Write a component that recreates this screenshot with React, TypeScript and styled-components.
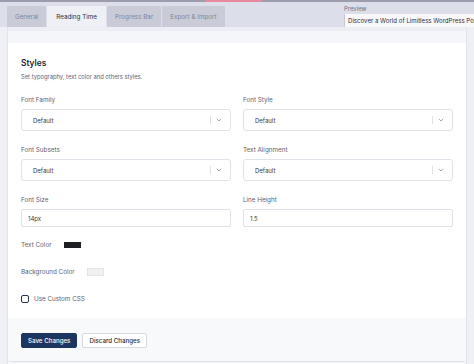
import styled, { createGlobalStyle } from "styled-components";

const GlobalStyle = createGlobalStyle`
  html, body {
    margin: 0;
    padding: 0;
    background: #f3f4f8;
    font-family: Inter, "Noto Sans", sans-serif;
    color: #1f2430;
  }
  * { box-sizing: border-box; }
`;

const Page = styled.div`
  width: 474px;
  height: 364px;
  overflow: hidden;
  display: flex;
  flex-direction: column;
`;

const TopStripe = styled.div`
  display: flex;
  height: 2px;
  flex-shrink: 0;
`;

const StripeSegment = styled.div<{ $color: string; $width?: number }>`
  background: ${(p) => p.$color};
  width: ${(p) => (p.$width ? `${p.$width}px` : "auto")};
  flex: ${(p) => (p.$width ? "0 0 auto" : "1")};
`;

const Header = styled.div`
  height: 25px;
  flex-shrink: 0;
  background: #dcdeea;
  display: flex;
  justify-content: space-between;
  align-items: flex-end;
  padding-left: 7px;
`;

const Tabs = styled.div`
  display: flex;
  align-items: flex-end;
  height: 22px;
`;

const Tab = styled.div<{ $active?: boolean }>`
  height: 21px;
  padding: 0 ${(p) => (p.$active ? 9 : 8)}px;
  display: flex;
  align-items: center;
  font-size: 6.3px;
  color: ${(p) => (p.$active ? "#2a2f3a" : "#80859a")};
  background: ${(p) => (p.$active ? "#eef0f6" : "#c9ccd7")};
  margin-right: 1px;
  border-radius: 1px 1px 0 0;
`;

const Preview = styled.div`
  width: 130px;
  display: flex;
  flex-direction: column;
  align-self: stretch;
  justify-content: flex-end;
`;

const PreviewLabel = styled.div`
  font-size: 6px;
  color: #6d7282;
  padding: 0 0 2px 0;
`;

const PreviewBox = styled.div`
  height: 13px;
  background: #f8f8fb;
  border-left: 1px solid #c7c9d3;
  padding-left: 3px;
  display: flex;
  align-items: center;
  white-space: nowrap;
  overflow: hidden;
  font-size: 6.1px;
  color: #2a2d36;
`;

const Body = styled.div`
  flex: 1;
  display: flex;
  min-height: 0;
`;

const Rail = styled.div<{ $side: "left" | "right" }>`
  width: 8px;
  background: #eef0f6;
  border-${(p) => (p.$side === "left" ? "right" : "left")}: 1px solid #e1e4ec;
`;

const Main = styled.div`
  flex: 1;
  display: flex;
  flex-direction: column;
  padding-top: 16px;
  background: linear-gradient(#eceef4 0 4px, #f5f6f9 4px);
`;

const Card = styled.div`
  background: #fff;
  border-bottom: 1px solid #dde0e7;
  border-radius: 0 0 3px 3px;
  display: flex;
  flex-direction: column;
`;

const CardBody = styled.div`
  padding: 14px 13px 15px 13px;
`;

const Title = styled.h2`
  margin: 0;
  font-size: 8.4px;
  font-weight: 600;
  color: #1d2230;
  line-height: 12px;
`;

const Subtitle = styled.p`
  margin: 3px 0 0;
  font-size: 5.8px;
  color: #5d6372;
  line-height: 10px;
`;

const Grid = styled.div`
  display: grid;
  grid-template-columns: 1fr 1fr;
  column-gap: 12px;
  row-gap: 15px;
  margin-top: 14px;
`;

const Field = styled.div`
  display: flex;
  flex-direction: column;
`;

const Label = styled.label`
  font-size: 6.3px;
  color: #5b6170;
  line-height: 9px;
  margin-bottom: 4px;
`;

const Select = styled.div`
  height: 22px;
  border: 1px solid #dfe2e8;
  border-radius: 3px;
  display: flex;
  align-items: center;
  padding: 0 8px 0 11px;
  font-size: 6px;
  color: #353a46;
`;

const SelectValue = styled.span`
  flex: 1;
`;

const Divider = styled.span`
  width: 1px;
  height: 8px;
  background: #e1e3e8;
  margin-right: 5px;
`;

const Input = styled.div`
  height: 18px;
  border: 1px solid #dfe2e8;
  border-radius: 2px;
  display: flex;
  align-items: center;
  padding: 0 6px;
  font-size: 6px;
  color: #353a46;
`;

const ColorRow = styled.div<{ $gap: number }>`
  display: flex;
  align-items: center;
  gap: ${(p) => p.$gap}px;
  font-size: 6.3px;
  color: #5b6170;
  height: 8px;
`;

const Swatch = styled.span<{ $color: string; $h: number; $border: string }>`
  width: 17px;
  height: ${(p) => p.$h}px;
  background: ${(p) => p.$color};
  border: 1px solid ${(p) => p.$border};
`;

const Stack = styled.div`
  display: flex;
  flex-direction: column;
  gap: 19px;
  margin-top: 14px;
`;

const CheckRow = styled.label`
  display: flex;
  align-items: center;
  gap: 5px;
  font-size: 6.3px;
  color: #5b6170;
`;

const Checkbox = styled.span`
  width: 8px;
  height: 8px;
  border: 1.2px solid #243250;
  border-radius: 2px;
  background: #fff;
`;

const Footer = styled.div`
  background: #f7f9fb;
  padding: 15px 13px 13px;
  display: flex;
  gap: 5px;
  border-radius: 0 0 3px 3px;
`;

const Button = styled.button<{ $primary?: boolean }>`
  height: 15px;
  padding: 0 6px;
  font-family: inherit;
  font-size: 6.2px;
  font-weight: 500;
  border-radius: 2px;
  cursor: pointer;
  background: ${(p) => (p.$primary ? "#1d3661" : "#fff")};
  color: ${(p) => (p.$primary ? "#fff" : "#2a2f3a")};
  border: 1px solid ${(p) => (p.$primary ? "#1d3661" : "#d6d9e0")};
`;

const Chevron = () => (
  <svg width="6" height="4" viewBox="0 0 6 4" fill="none">
    <path d="M0.8 0.8 L3 3 L5.2 0.8" stroke="#8a8f9b" strokeWidth="0.8" />
  </svg>
);

const fields = [
  { label: "Font Family", value: "Default", kind: "select" },
  { label: "Font Style", value: "Default", kind: "select" },
  { label: "Font Subsets", value: "Default", kind: "select" },
  { label: "Text Alignment", value: "Default", kind: "select" },
  { label: "Font Size", value: "14px", kind: "input" },
  { label: "Line Height", value: "1.5", kind: "input" },
];

export default function App() {
  return (
    <Page>
      <GlobalStyle />
      <TopStripe>
        <StripeSegment $color="#9c9cad" $width={205} />
        <StripeSegment $color="#e8899e" $width={57} />
        <StripeSegment $color="#9c9cad" />
      </TopStripe>
      <Header>
        <Tabs>
          <Tab>General</Tab>
          <Tab $active>Reading Time</Tab>
          <Tab>Progress Bar</Tab>
          <Tab>Export &amp; Import</Tab>
        </Tabs>
        <Preview>
          <PreviewLabel>Preview</PreviewLabel>
          <PreviewBox>Discover a World of Limitless WordPress Pos</PreviewBox>
        </Preview>
      </Header>
      <Body>
        <Rail $side="left" />
        <Main>
          <Card>
            <CardBody>
              <Title>Styles</Title>
              <Subtitle>Set typography, text color and others styles.</Subtitle>
              <Grid>
                {fields.map((f) => (
                  <Field key={f.label}>
                    <Label>{f.label}</Label>
                    {f.kind === "select" ? (
                      <Select>
                        <SelectValue>{f.value}</SelectValue>
                        <Divider />
                        <Chevron />
                      </Select>
                    ) : (
                      <Input>{f.value}</Input>
                    )}
                  </Field>
                ))}
              </Grid>
              <Stack>
                <ColorRow $gap={12}>
                  Text Color
                  <Swatch $color="#1e1f22" $border="#1e1f22" $h={6} />
                </ColorRow>
                <ColorRow $gap={12}>
                  Background Color
                  <Swatch $color="#f1f1f3" $border="#e3e4e8" $h={8} />
                </ColorRow>
                <CheckRow>
                  <Checkbox />
                  Use Custom CSS
                </CheckRow>
              </Stack>
            </CardBody>
            <Footer>
              <Button $primary>Save Changes</Button>
              <Button>Discard Changes</Button>
            </Footer>
          </Card>
        </Main>
        <Rail $side="right" />
      </Body>
    </Page>
  );
}
